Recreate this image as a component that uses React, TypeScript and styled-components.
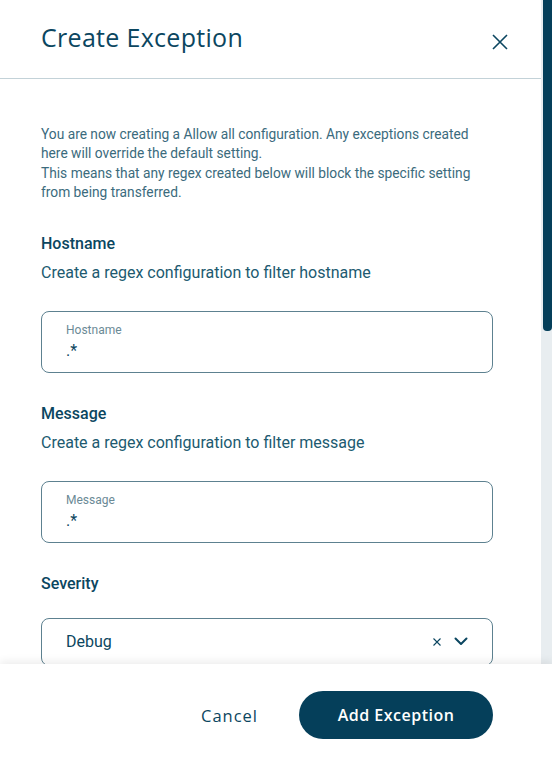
import React from "react";
import styled, { createGlobalStyle } from "styled-components";

const GlobalStyle = createGlobalStyle`
  html, body {
    margin: 0;
    padding: 0;
    background: #ffffff;
  }
  * {
    box-sizing: border-box;
  }
`;

const ink = "#0b4660";

// visible part / total height of the form, drives the scrollbar thumb
const visibleRatio = 0.498;

export default function App() {
  return (
    <>
      <GlobalStyle />
      <Modal>
        <Viewport>
          <ScrollContent>
            <Header>
              <Title>Create Exception</Title>
              <CloseButton aria-label="Close">
                <svg width="18" height="18" viewBox="0 0 18 18">
                  <path d="M2 2 L16 16 M16 2 L2 16" stroke={ink} strokeWidth="1.6" fill="none" />
                </svg>
              </CloseButton>
            </Header>
            <Body>
              <Info>
                You are now creating a Allow all configuration. Any exceptions created here will
                override the default setting.
                <br />
                This means that any regex created below will block the specific setting from being
                transferred.
              </Info>

              <Section>
                <SectionTitle>Hostname</SectionTitle>
                <SectionHint>Create a regex configuration to filter hostname</SectionHint>
                <Field>
                  <FieldLabel>Hostname</FieldLabel>
                  <FieldValue>.*</FieldValue>
                </Field>
              </Section>

              <Section>
                <SectionTitle>Message</SectionTitle>
                <SectionHint>Create a regex configuration to filter message</SectionHint>
                <Field>
                  <FieldLabel>Message</FieldLabel>
                  <FieldValue>.*</FieldValue>
                </Field>
              </Section>

              <Section>
                <SectionTitle>Severity</SectionTitle>
                <Select>
                  <SelectValue>Debug</SelectValue>
                  <SelectIcons>
                    <svg width="10" height="10" viewBox="0 0 10 10">
                      <path d="M1.5 1.5 L8.5 8.5 M8.5 1.5 L1.5 8.5" stroke={ink} strokeWidth="1.1" fill="none" />
                    </svg>
                    <svg width="14" height="9" viewBox="0 0 14 9">
                      <path
                        d="M1.5 1.5 L7 7 L12.5 1.5"
                        stroke={ink}
                        strokeWidth="2"
                        fill="none"
                        strokeLinecap="round"
                        strokeLinejoin="round"
                      />
                    </svg>
                  </SelectIcons>
                </Select>
              </Section>
            </Body>
          </ScrollContent>
          <ScrollTrack>
            <ScrollThumb style={{ height: `${visibleRatio * 100}%` }} />
          </ScrollTrack>
        </Viewport>
        <Footer>
          <CancelButton>Cancel</CancelButton>
          <PrimaryButton>Add Exception</PrimaryButton>
        </Footer>
      </Modal>
    </>
  );
}

const Modal = styled.div`
  width: 552px;
  height: 766px;
  display: flex;
  flex-direction: column;
  background: #ffffff;
  font-family: Roboto, "Liberation Sans", sans-serif;
  color: ${ink};
  overflow: hidden;
`;

const Viewport = styled.div`
  flex: 1;
  min-height: 0;
  display: flex;
`;

const ScrollContent = styled.div`
  flex: 1;
  min-width: 0;
  overflow: hidden;
`;

const ScrollTrack = styled.div`
  width: 11px;
  flex-shrink: 0;
  background: #e8edf0;
  display: flex;
  justify-content: flex-end;
`;

const ScrollThumb = styled.div`
  width: 9px;
  background: #053f5a;
  border-radius: 0 0 4px 4px;
`;

const Header = styled.div`
  height: 79px;
  display: flex;
  align-items: flex-start;
  justify-content: space-between;
  padding: 20px 32px 0 41px;
  border-bottom: 1px solid #c3d2d8;
`;

const Title = styled.h1`
  margin: 0;
  font-family: "Open Sans", sans-serif;
  font-weight: 400;
  font-size: 25px;
  line-height: 34px;
  letter-spacing: 0.3px;
  color: ${ink};
`;

const CloseButton = styled.button`
  border: none;
  background: none;
  padding: 0;
  margin-top: 13px;
  width: 18px;
  height: 18px;
  display: flex;
  cursor: pointer;
`;

const Body = styled.div`
  padding: 46px 48px 0 41px;
`;

const Info = styled.p`
  margin: 0;
  font-size: 13.75px;
  line-height: 19.4px;
  color: #3b6b7d;
`;

const Section = styled.div`
  margin-top: 29px;
  display: flex;
  flex-direction: column;
`;

const SectionTitle = styled.div`
  font-size: 16px;
  font-weight: 500;
  line-height: 24px;
  color: ${ink};
`;

const SectionHint = styled.div`
  margin-top: 5px;
  font-size: 16px;
  line-height: 24px;
  color: #205a70;
`;

const Field = styled.div`
  margin-top: 26px;
  height: 62px;
  border: 1px solid #5d8190;
  border-radius: 8px;
  padding: 10px 24px 0;
`;

const FieldLabel = styled.div`
  font-size: 12px;
  line-height: 16px;
  color: #6b8a96;
`;

const FieldValue = styled.div`
  margin-top: 2px;
  font-size: 16px;
  line-height: 22px;
  color: ${ink};
`;

const Select = styled.div`
  margin-top: 22px;
  height: 48px;
  border: 1px solid #5d8190;
  border-radius: 8px;
  padding: 0 24px;
  display: flex;
  align-items: center;
  justify-content: space-between;
`;

const SelectValue = styled.div`
  font-size: 16px;
  color: ${ink};
`;

const SelectIcons = styled.div`
  display: flex;
  align-items: center;
  gap: 12px;
`;

const Footer = styled.div`
  height: 102px;
  flex-shrink: 0;
  display: flex;
  align-items: center;
  justify-content: flex-end;
  gap: 41px;
  padding: 0 59px 0 0;
  background: #ffffff;
  box-shadow: 0 -3px 8px rgba(0, 0, 0, 0.07);
  position: relative;
`;

const CancelButton = styled.button`
  border: none;
  background: none;
  padding: 0;
  font-family: "Open Sans", sans-serif;
  font-size: 16.5px;
  font-weight: 500;
  letter-spacing: 1px;
  color: ${ink};
  cursor: pointer;
`;

const PrimaryButton = styled.button`
  width: 194px;
  height: 48px;
  border: none;
  border-radius: 24px;
  background: #053f5a;
  color: #ffffff;
  font-family: "Open Sans", sans-serif;
  font-size: 16px;
  font-weight: 600;
  letter-spacing: 0.5px;
  cursor: pointer;
`;
